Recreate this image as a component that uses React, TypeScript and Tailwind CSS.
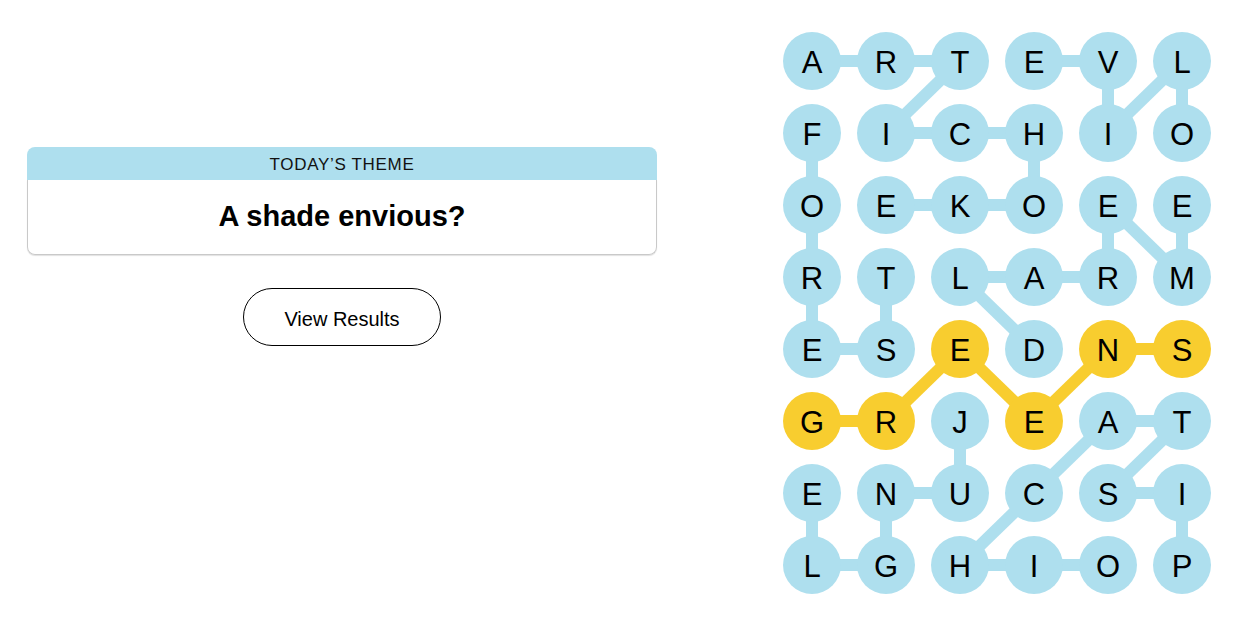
const GRID = [
  ['A', 'R', 'T', 'E', 'V', 'L'],
  ['F', 'I', 'C', 'H', 'I', 'O'],
  ['O', 'E', 'K', 'O', 'E', 'E'],
  ['R', 'T', 'L', 'A', 'R', 'M'],
  ['E', 'S', 'E', 'D', 'N', 'S'],
  ['G', 'R', 'J', 'E', 'A', 'T'],
  ['E', 'N', 'U', 'C', 'S', 'I'],
  ['L', 'G', 'H', 'I', 'O', 'P'],
]

type Edge = [number, number, number, number]

const BLUE_EDGES: Edge[] = [
  [0, 0, 0, 1], [0, 1, 0, 2], [0, 2, 1, 1], [0, 3, 0, 4], [0, 4, 1, 4], [0, 5, 1, 4], [0, 5, 1, 5],
  [1, 1, 1, 2], [1, 2, 1, 3], [1, 0, 2, 0], [1, 3, 2, 3],
  [2, 1, 2, 2], [2, 2, 2, 3], [2, 0, 3, 0], [2, 4, 3, 4], [2, 4, 3, 5], [2, 5, 3, 5],
  [3, 2, 3, 3], [3, 3, 3, 4], [3, 0, 4, 0], [3, 1, 4, 1], [3, 2, 4, 3],
  [4, 0, 4, 1],
  [5, 4, 5, 5], [5, 2, 6, 2], [5, 4, 6, 3], [5, 5, 6, 4],
  [6, 1, 6, 2], [6, 4, 6, 5], [6, 0, 7, 0], [6, 1, 7, 1], [6, 5, 7, 5], [6, 3, 7, 2],
  [7, 0, 7, 1], [7, 2, 7, 3], [7, 3, 7, 4],
]

// spangram path
const YELLOW_EDGES: Edge[] = [
  [5, 0, 5, 1], [5, 1, 4, 2], [4, 2, 5, 3], [5, 3, 4, 4], [4, 4, 4, 5],
]

const SPANGRAM = new Set(['5-0', '5-1', '4-2', '5-3', '4-4', '4-5'])

const cx = (c: number) => 29 + c * 74
const cy = (r: number) => 29 + r * 72

function Board() {
  return (
    <div className="relative w-[428px]">
      {/* connectors behind the letters */}
      <svg className="absolute left-0 top-0" width="428" height="562" viewBox="0 0 428 562">
        {BLUE_EDGES.map(([r1, c1, r2, c2], i) => (
          <line key={`b${i}`} x1={cx(c1)} y1={cy(r1)} x2={cx(c2)} y2={cy(r2)} stroke="#aedfee" strokeWidth="12" />
        ))}
        {YELLOW_EDGES.map(([r1, c1, r2, c2], i) => (
          <line key={`y${i}`} x1={cx(c1)} y1={cy(r1)} x2={cx(c2)} y2={cy(r2)} stroke="#f8cd2f" strokeWidth="12" />
        ))}
      </svg>
      <div className="relative grid grid-cols-[repeat(6,58px)] gap-x-[16px] gap-y-[14px]">
        {GRID.map((row, r) =>
          row.map((letter, c) => (
            <div
              key={`${r}-${c}`}
              className={`flex h-[58px] w-[58px] items-center justify-center rounded-full pt-[2px] text-[31px] leading-none text-black ${
                SPANGRAM.has(`${r}-${c}`) ? 'bg-[#f8cd2f]' : 'bg-[#aedfee]'
              }`}
            >
              {letter}
            </div>
          )),
        )}
      </div>
    </div>
  )
}

export default function App() {
  return (
    <div className="flex min-h-[642px] w-[1250px] bg-white font-['Liberation_Sans',sans-serif] text-black">
      {/* Theme + results */}
      <div className="ml-[27px] mt-[147px] flex w-[630px] flex-col items-center">
        <div className="w-full">
          <div className="flex h-[33px] items-center justify-center rounded-t-[8px] bg-[#aedfee] pt-[3px] text-[17px] uppercase tracking-[0.04em] text-[#121212]">
            Today’s Theme
          </div>
          <div className="flex h-[75px] items-center justify-center rounded-b-[8px] border border-t-0 border-[#c9c9c9] text-[29px] font-bold shadow-[0_1px_1px_rgba(0,0,0,0.12)]">
            A shade envious?
          </div>
        </div>
        <button className="mt-[33px] h-[58px] w-[198px] rounded-full border border-black pt-[4px] text-[20px]">
          View Results
        </button>
      </div>

      {/* Letter board */}
      <div className="ml-[126px] mt-[32px]">
        <Board />
      </div>
    </div>
  )
}
